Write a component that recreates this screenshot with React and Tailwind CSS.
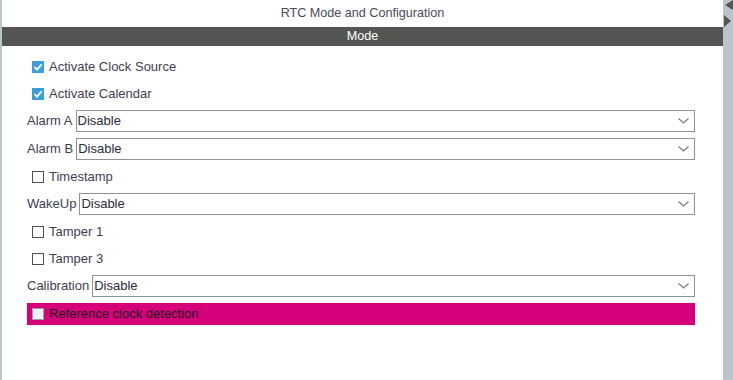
import React from "react";

const font = { fontFamily: '"Liberation Sans", Arial, sans-serif' };

function Check({ checked, label }) {
  return (
    <div className="flex h-[27px] items-center pl-[5px]">
      {checked ? (
        <span className="flex h-[12px] w-[12px] items-center justify-center bg-[#3b9fd9]">
          <svg width="10" height="10" viewBox="0 0 10 10">
            <path d="M1.5 5.2 L4 7.6 L8.6 2.4" fill="none" stroke="#fff" strokeWidth="1.8" />
          </svg>
        </span>
      ) : (
        <span className="h-[12px] w-[12px] border border-[#505050] bg-white" />
      )}
      <span className="ml-[5px] text-[13px] text-[#3e3e52]">{label}</span>
    </div>
  );
}

function Select({ label }) {
  return (
    <div className="flex h-[28px] items-center">
      <span className="mr-[3px] text-[13px] text-[#3e3e52]">{label}</span>
      <div className="flex h-[22px] flex-1 items-center justify-between border border-[#8f9397] bg-white pl-[1px] pr-[5px]">
        <span className="text-[13px] text-[#2a2a3a]">Disable</span>
        <svg width="11" height="8" viewBox="0 0 11 8">
          <path d="M0.5 1.5 L5.5 6 L10.5 1.5" fill="none" stroke="#7a7a7a" strokeWidth="1.2" />
        </svg>
      </div>
    </div>
  );
}

export default function App() {
  return (
    <div className="flex h-[380px] w-[733px] overflow-hidden bg-white" style={font}>
      <div className="w-[2px] bg-[#bac4cc]" />
      <div className="flex flex-1 flex-col">
        <div className="flex h-[27px] items-center justify-center text-[12.6px] text-[#4a4a58]">
          RTC Mode and Configuration
        </div>
        <div className="flex h-[19px] items-center justify-center bg-[#535553] text-[12.6px] text-white">
          Mode
        </div>
        <div className="flex flex-col pl-[25px] pr-[28px] pt-[7px]">
          <Check checked label="Activate Clock Source" />
          <Check checked label="Activate Calendar" />
          <Select label="Alarm A" />
          <Select label="Alarm B" />
          <Check label="Timestamp" />
          <Select label="WakeUp" />
          <Check label="Tamper 1" />
          <Check label="Tamper 3" />
          <Select label="Calibration" />
          <div className="mt-[3px] flex h-[22px] items-center bg-[#d5007a] pl-[5px]">
            <span className="h-[12px] w-[12px] border border-[#9aa0a6] bg-[#eef1f3]" />
            <span className="ml-[5px] text-[13px] text-[#1a1a1a]">Reference clock detection</span>
          </div>
        </div>
      </div>
      <div className="flex w-[10px] flex-col bg-[#bac4cc]">
        <svg width="10" height="30" viewBox="0 0 10 30">
          <path d="M10 0 L10 10 L2 5 Z" fill="#555" />
          <path d="M1 15 L8 21 L1 27 Z" fill="#555" />
        </svg>
      </div>
    </div>
  );
}
